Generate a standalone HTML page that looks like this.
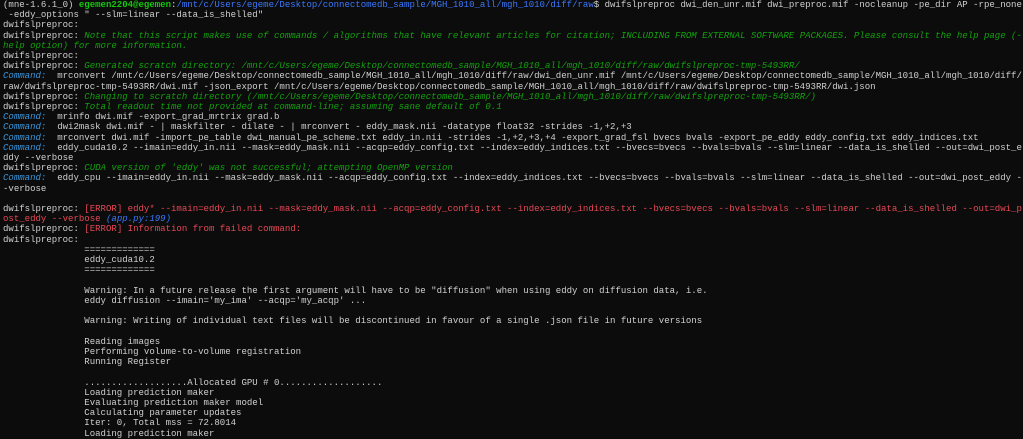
<!DOCTYPE html>
<html><head><meta charset="utf-8"><style>
html,body{margin:0;padding:0;background:#0c0c0c;width:1023px;height:437px;overflow:hidden}
#t{position:absolute;left:3px;top:0px;font-family:"Liberation Mono",monospace;font-size:9.04px;line-height:10.2px;color:#d0d0d0;white-space:pre}
.g{color:#13a10e;font-style:italic}
.ug{color:#16c60c;font-weight:bold}
.p{color:#3b78ff}
.c{color:#3a96dd;font-style:italic}
.r{color:#e74856}
.b{color:#3b78ff;font-style:italic}
</style></head><body><div id="t"><span>(mne-1.6.1_0) </span><span class="ug">egemen2204@egemen</span>:<span class="p">/mnt/c/Users/egeme/Desktop/connectomedb_sample/MGH_1010_all/mgh_1010/diff/raw</span>$ dwifslpreproc dwi_den_unr.mif dwi_preproc.mif -nocleanup -pe_dir AP -rpe_none
 -eddy_options " --slm=linear --data_is_shelled"
dwifslpreproc:
dwifslpreproc: <span class="g">Note that this script makes use of commands / algorithms that have relevant articles for citation; INCLUDING FROM EXTERNAL SOFTWARE PACKAGES. Please consult the help page (-</span>
<span class="g">help option) for more information.</span>
dwifslpreproc:
dwifslpreproc: <span class="g">Generated scratch directory: /mnt/c/Users/egeme/Desktop/connectomedb_sample/MGH_1010_all/mgh_1010/diff/raw/dwifslpreproc-tmp-5493RR/</span>
<span class="c">Command:</span>  mrconvert /mnt/c/Users/egeme/Desktop/connectomedb_sample/MGH_1010_all/mgh_1010/diff/raw/dwi_den_unr.mif /mnt/c/Users/egeme/Desktop/connectomedb_sample/MGH_1010_all/mgh_1010/diff/
raw/dwifslpreproc-tmp-5493RR/dwi.mif -json_export /mnt/c/Users/egeme/Desktop/connectomedb_sample/MGH_1010_all/mgh_1010/diff/raw/dwifslpreproc-tmp-5493RR/dwi.json
dwifslpreproc: <span class="g">Changing to scratch directory (/mnt/c/Users/egeme/Desktop/connectomedb_sample/MGH_1010_all/mgh_1010/diff/raw/dwifslpreproc-tmp-5493RR/)</span>
dwifslpreproc: <span class="g">Total readout time not provided at command-line; assuming sane default of 0.1</span>
<span class="c">Command:</span>  mrinfo dwi.mif -export_grad_mrtrix grad.b
<span class="c">Command:</span>  dwi2mask dwi.mif - | maskfilter - dilate - | mrconvert - eddy_mask.nii -datatype float32 -strides -1,+2,+3
<span class="c">Command:</span>  mrconvert dwi.mif -import_pe_table dwi_manual_pe_scheme.txt eddy_in.nii -strides -1,+2,+3,+4 -export_grad_fsl bvecs bvals -export_pe_eddy eddy_config.txt eddy_indices.txt
<span class="c">Command:</span>  eddy_cuda10.2 --imain=eddy_in.nii --mask=eddy_mask.nii --acqp=eddy_config.txt --index=eddy_indices.txt --bvecs=bvecs --bvals=bvals --slm=linear --data_is_shelled --out=dwi_post_e
ddy --verbose
dwifslpreproc: <span class="g">CUDA version of 'eddy' was not successful; attempting OpenMP version</span>
<span class="c">Command:</span>  eddy_cpu --imain=eddy_in.nii --mask=eddy_mask.nii --acqp=eddy_config.txt --index=eddy_indices.txt --bvecs=bvecs --bvals=bvals --slm=linear --data_is_shelled --out=dwi_post_eddy -
-verbose

dwifslpreproc: <span class="r">[ERROR] eddy* --imain=eddy_in.nii --mask=eddy_mask.nii --acqp=eddy_config.txt --index=eddy_indices.txt --bvecs=bvecs --bvals=bvals --slm=linear --data_is_shelled --out=dwi_p</span>
<span class="r">ost_eddy --verbose</span> <span class="b">(app.py:199)</span>
dwifslpreproc: <span class="r">[ERROR] Information from failed command:</span>
dwifslpreproc:
               =============
               eddy_cuda10.2
               =============

               Warning: In a future release the first argument will have to be "diffusion" when using eddy on diffusion data, i.e.
               eddy diffusion --imain='my_ima' --acqp='my_acqp' ...

               Warning: Writing of individual text files will be discontinued in favour of a single .json file in future versions

               Reading images
               Performing volume-to-volume registration
               Running Register

               ...................Allocated GPU # 0...................
               Loading prediction maker
               Evaluating prediction maker model
               Calculating parameter updates
               Iter: 0, Total mss = 72.8014
               Loading prediction maker
</div></body></html>
